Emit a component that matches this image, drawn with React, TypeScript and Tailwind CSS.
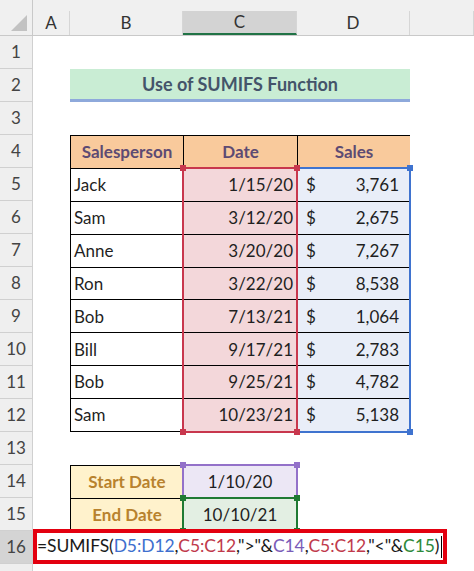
import React from 'react'

const rows = [
  { name: 'Jack', date: '1/15/20', sales: '3,761' },
  { name: 'Sam', date: '3/12/20', sales: '2,675' },
  { name: 'Anne', date: '3/20/20', sales: '7,267' },
  { name: 'Ron', date: '3/22/20', sales: '8,538' },
  { name: 'Bob', date: '7/13/21', sales: '1,064' },
  { name: 'Bill', date: '9/17/21', sales: '2,783' },
  { name: 'Bob', date: '9/25/21', sales: '4,782' },
  { name: 'Sam', date: '10/23/21', sales: '5,138' },
]

const rowNums = Array.from({ length: 17 }, (_, i) => i + 1)

// small handle squares at the corners of a highlighted range
function Handles({ color }: { color: string }) {
  return (
    <>
      <span className={`absolute -left-[4px] -top-[4px] w-[6px] h-[6px] ${color}`} />
      <span className={`absolute -right-[4px] -top-[4px] w-[6px] h-[6px] ${color}`} />
      <span className={`absolute -left-[4px] -bottom-[4px] w-[6px] h-[6px] ${color}`} />
      <span className={`absolute -right-[4px] -bottom-[4px] w-[6px] h-[6px] ${color}`} />
    </>
  )
}

export default function App() {
  return (
    <div
      className="w-[474px] h-[571px] overflow-hidden bg-white text-[17px] text-[#1f1f1f]"
      style={{ fontFamily: 'Lato, "Open Sans", sans-serif' }}
    >
      <div className="grid grid-cols-[33px_37px_113px_114px_113px_1fr] grid-rows-[36px_repeat(17,33px)]">
        {/* Corner */}
        <div className="col-start-1 row-start-1 bg-[#f0f0f0] border-b border-r border-[#c9c9c9] relative">
          <svg className="absolute right-[5px] bottom-[4px]" width="16" height="16" viewBox="0 0 16 16">
            <polygon points="16,0 16,16 0,16" fill="#c2c2c2" />
          </svg>
        </div>

        {/* Column headers */}
        {['A', 'B', 'C', 'D', ''].map((l, i) => (
          <div
            key={i}
            className={`row-start-1 flex flex-col justify-end bg-[#f0f0f0] border-b border-[#c9c9c9] ${
              i === 0 ? 'col-start-2' : i === 1 ? 'col-start-3' : i === 2 ? 'col-start-4' : i === 3 ? 'col-start-5' : 'col-start-6'
            }`}
          >
            <div
              className={`h-[24px] flex items-center justify-center border-r border-[#d6d6d6] text-[#333] ${
                l === 'C' ? 'bg-[#d3d3d3] border-b-2 border-b-[#217346] text-[#1e4d2e]' : ''
              }`}
            >
              {l}
            </div>
          </div>
        ))}

        {/* Row headers */}
        {rowNums.map((n) => (
          <div
            key={n}
            className={`col-start-1 flex items-center justify-center border-b border-r border-[#d0d0d0] text-[#444] ${
              n === 16 ? 'bg-[#d4d4d4]' : 'bg-[#efefef]'
            }`}
            style={{ gridRowStart: n + 1 }}
          >
            {n <= 16 ? n : ''}
          </div>
        ))}

        {/* Title */}
        <div className="col-start-3 col-span-3 row-start-3 bg-[#c9edd4] border-b-[3px] border-[#8ea9db] flex items-center justify-center font-bold text-[18px] text-[#44546a]">
          Use of SUMIFS Function
        </div>

        {/* Main table */}
        <div className="col-start-3 col-span-3 row-start-5 row-span-9 grid grid-cols-[112px_113px_112px] grid-rows-9 gap-px bg-black p-px">
          <div className="bg-[#f9ca9c] flex items-center justify-center font-bold text-[#5d4b73]">Salesperson</div>
          <div className="bg-[#f9ca9c] flex items-center justify-center font-bold text-[#5d4b73]">Date</div>
          <div className="bg-[#f9ca9c] flex items-center justify-center font-bold text-[#5d4b73]">Sales</div>
          {rows.map((r, i) => (
            <React.Fragment key={i}>
              <div className="bg-white flex items-center pl-[3px]">{r.name}</div>
              <div className="bg-[#f3d7da] flex items-center justify-end pr-[4px]">{r.date}</div>
              <div className="bg-[#e9eef8] flex items-center justify-between pl-[8px] pr-[11px]">
                <span>$</span>
                <span>{r.sales}</span>
              </div>
            </React.Fragment>
          ))}
        </div>

        {/* Range highlights */}
        <div className="col-start-5 row-start-6 row-span-8 -mx-px -my-px relative border-2 border-[#3f73cf] pointer-events-none">
          <Handles color="bg-[#3f73cf]" />
        </div>
        <div className="col-start-4 row-start-6 row-span-8 -mx-px -my-px relative border-2 border-[#c8374d] pointer-events-none">
          <Handles color="bg-[#c8374d]" />
        </div>

        {/* Date criteria */}
        <div className="col-start-3 row-start-15 row-span-2 grid grid-rows-2 gap-px bg-black p-px -mr-px">
          <div className="bg-[#fff2cc] flex items-center justify-center font-bold text-[#b8822e]">Start Date</div>
          <div className="bg-[#fff2cc] flex items-center justify-center font-bold text-[#b8822e]">End Date</div>
        </div>
        <div className="col-start-4 row-start-15 relative -mx-px -my-px border-2 border-[#9371c9] bg-[#ece7f5] flex items-center justify-center">
          1/10/20
          <Handles color="bg-[#9371c9]" />
        </div>
        <div className="col-start-4 row-start-16 relative -mx-px -my-px border-2 border-[#1f7a33] bg-[#e3efe3] flex items-center justify-center">
          10/10/21
          <Handles color="bg-[#1f7a33]" />
        </div>

        {/* Formula being edited */}
        <div className="col-start-2 col-span-5 row-start-17 relative">
          <div className="absolute left-0 -top-[2px] w-[414px] h-[35px] border-[4px] border-[#e3000f] bg-white flex items-center text-[17.5px] tracking-[-0.1px] text-[#1a1a1a] whitespace-nowrap">
            <span>=SUMIFS(</span>
            <span className="text-[#3e6fce]">D5:D12</span>
            <span>,</span>
            <span className="text-[#c0394b]">C5:C12</span>
            <span>,"&gt;"&amp;</span>
            <span className="text-[#7a5cb8]">C14</span>
            <span>,</span>
            <span className="text-[#c0394b]">C5:C12</span>
            <span>,"&lt;"&amp;</span>
            <span className="text-[#2e8a3a]">C15</span>
            <span>)</span>
            <span className="inline-block w-px h-[22px] bg-black ml-[2px]" />
          </div>
        </div>
      </div>
    </div>
  )
}
